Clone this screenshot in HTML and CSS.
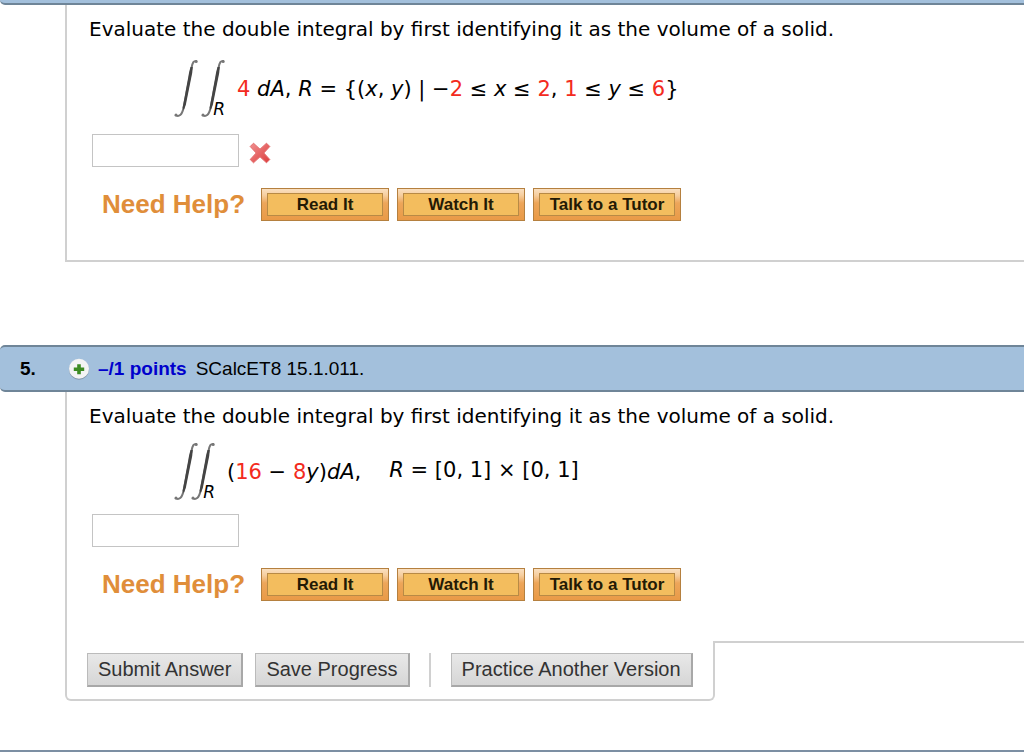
FILE: index.html
```html
<!DOCTYPE html>
<html lang="en">
<head>
<meta charset="utf-8">
<title>SCalcET8 15.1 Homework</title>
<link rel="stylesheet" href="styles.css">
</head>
<body>
<svg class="defs" aria-hidden="true">
  <symbol id="integral" viewBox="0 0 24 58">
    <path d="M1 56C5 58.500 8 56 9.500 49L17.500 9C18.600 3 19.500 1.500 23 2" fill="none" stroke="#777" stroke-width="2"/>
    <path d="M8.600 49L15.200 13L16.500 8L18.800 8L18.200 14L11.800 46L9.800 51Z" fill="#444"/>
    <circle cx="2" cy="56" r="1.500" fill="#777"/>
    <circle cx="22.200" cy="2.500" r="1.500" fill="#777"/>
  </symbol>
</svg>
<main>
  <section class="question">
    <div class="bar bar-end"></div>
    <div class="body body-closed">
      <p class="prompt">Evaluate the double integral by first identifying it as the volume of a solid.</p>
      <div class="math math-spaced">
        <div class="integrals integrals-wide">
          <svg class="integral"><use href="#integral"/></svg>
          <svg class="integral"><use href="#integral"/></svg>
          <i class="region">R</i>
        </div>
        <span class="formula"><b class="num">4</b> <i>dA</i>, <i>R</i> = {(<i>x</i>, <i>y</i>) | −<b class="num">2</b> ≤ <i>x</i> ≤ <b class="num">2</b>, <b class="num">1</b> ≤ <i>y</i> ≤ <b class="num">6</b>}</span>
      </div>
      <div class="answer">
        <input class="field" type="text" aria-label="Answer to question 4">
        <svg class="wrong" viewBox="0 0 22 22" role="img" aria-label="Incorrect">
          <defs><linearGradient id="red" x1="0" y1="0" x2="1" y2="1"><stop offset="0" stop-color="#f09090"/><stop offset="1" stop-color="#dc3c3c"/></linearGradient></defs>
          <path d="M4.500 1.200L11 7.200L17.500 1.200L20.800 4.500L14.800 11L20.800 17.500L17.500 20.800L11 14.800L4.500 20.800L1.200 17.500L7.200 11L1.200 4.500Z" fill="url(#red)" stroke="#e36a6a" stroke-linejoin="round"/>
        </svg>
      </div>
      <div class="help">
        <span class="help-label">Need Help?</span>
        <button class="help-button" type="button"><span>Read It</span></button>
        <button class="help-button" type="button"><span>Watch It</span></button>
        <button class="help-button help-tutor" type="button"><span>Talk to a Tutor</span></button>
      </div>
    </div>
  </section>

  <section class="question">
    <header class="bar">
      <span class="number">5.</span>
      <svg class="plus" viewBox="0 0 22 22" aria-hidden="true">
        <circle cx="11" cy="11.800" r="10" fill="#8296aa"/>
        <circle cx="11" cy="10.800" r="10" fill="#f4f4f4"/>
        <path d="M9.200 6.200h3.600v3.300h3.400v3.400h-3.400v3.300H9.200v-3.300H5.800V9.500h3.400Z" fill="#3d8b22"/>
      </svg>
      <a class="points" href="#q5">–/1 points</a>
      <span>SCalcET8 15.1.011.</span>
    </header>
    <div class="body" id="q5">
      <p class="prompt">Evaluate the double integral by first identifying it as the volume of a solid.</p>
      <div class="math">
        <div class="integrals">
          <svg class="integral"><use href="#integral"/></svg>
          <svg class="integral"><use href="#integral"/></svg>
          <i class="region">R</i>
        </div>
        <span class="formula">(<b class="num">16</b> − <b class="num">8</b><i>y</i>)<i>dA</i>,</span>
        <span class="formula domain"><i>R</i> = [0, 1] × [0, 1]</span>
      </div>
      <div class="answer">
        <input class="field" type="text" aria-label="Answer to question 5">
      </div>
      <div class="help">
        <span class="help-label">Need Help?</span>
        <button class="help-button" type="button"><span>Read It</span></button>
        <button class="help-button" type="button"><span>Watch It</span></button>
        <button class="help-button help-tutor" type="button"><span>Talk to a Tutor</span></button>
      </div>
    </div>
    <footer class="footer">
      <div class="actions">
        <button class="action" type="button">Submit Answer</button>
        <button class="action" type="button">Save Progress</button>
        <div class="practice"><button class="action" type="button">Practice Another Version</button></div>
      </div>
      <div class="rule"></div>
    </footer>
  </section>
  <div class="next"></div>
</main>
</body>
</html>
```
FILE: styles.css
```css
* { box-sizing: border-box; }

body {
  margin: 0;
  background: #fff;
  color: #000;
  font-family: Verdana, "DejaVu Sans", sans-serif;
  font-size: 20px;
  line-height: 24px;
}

.defs { display: none; }

.bar {
  display: flex;
  align-items: center;
  height: 47px;
  padding-left: 20px;
  background: #a3c0dc;
  border: solid #6f8598;
  border-width: 2px 0;
  border-radius: 5px 0 0 5px;
  font-family: Arial, "Liberation Sans", sans-serif;
  font-size: 19px;
}
.bar-end {
  height: 5px;
  border-top: 0;
  border-radius: 0 0 0 5px;
}
.number { width: 48px; font-weight: bold; }
.plus { width: 22px; height: 22px; margin-right: 8px; }
.points {
  margin-right: 9px;
  color: #0000cc;
  font-weight: bold;
  text-decoration: none;
}

.body {
  margin-left: 65px;
  padding: 12px 0 40px 22px;
  border-left: 2px solid #d0d0d0;
}
.body-closed {
  margin-bottom: 83px;
  padding-bottom: 39px;
  border-bottom: 2px solid #d0d0d0;
}
.prompt { margin: 0; }

.math {
  display: flex;
  align-items: center;
  height: 58px;
  margin: 14px 0 14px 85px;
  font-size: 21px;
}
.math-spaced {
  margin-top: 18px;
  margin-bottom: 17px;
}
.integrals {
  display: flex;
  position: relative;
  margin-right: 12px;
}
.integral { width: 24px; height: 58px; }
.integral + .integral { margin-left: -7px; }
.integrals-wide .integral + .integral { margin-left: 3px; }
.region {
  position: absolute;
  right: 0;
  bottom: -2px;
  font-size: 17px;
  line-height: 20px;
}
.formula { padding-top: 2px; white-space: nowrap; }
.num { color: #f32a20; font-weight: normal; }
.domain { margin-left: 28px; padding: 0 0 2px; }

.answer {
  display: flex;
  align-items: center;
  gap: 10px;
  margin: 0 0 21px 3px;
}
.field {
  width: 147px;
  height: 33px;
  padding: 4px 8px;
  border: 1px solid #c4c4c4;
  font: inherit;
}
.wrong { width: 22px; height: 22px; margin-top: 4px; }

.help { display: flex; align-items: center; gap: 8px; margin-left: 13px; }
.help-label {
  margin-right: 8px;
  padding-bottom: 2px;
  color: #e08e3a;
  font: bold 26px/30px Arial, "Liberation Sans", sans-serif;
}
.help-button {
  width: 128px;
  height: 33px;
  padding: 4px 5px;
  border: 1px solid #b5803f;
  background: linear-gradient(#f9dfc0, #f6cfa0 20%, #eda65a 45%, #e99a47);
  color: #231a05;
  font: bold 17px/21px Arial, "Liberation Sans", sans-serif;
}
.help-button span {
  display: block;
  border: 1px solid #b88a45;
  background: #f3bd5e;
}
.help-tutor { width: 148px; }

.footer { display: flex; margin-left: 65px; }
.actions {
  display: flex;
  gap: 12px;
  padding: 12px 20px 12px 20px;
  border: solid #d0d0d0;
  border-width: 0 2px 2px;
  border-radius: 0 0 6px 6px;
}
.action {
  height: 34px;
  padding: 0 10px 2px;
  border: 1px solid #bbb;
  border-right: 2px solid #a8a8a8;
  border-bottom: 2px solid #a8a8a8;
  background: linear-gradient(#e8e8e8, #d6d6d6);
  color: #333;
  font: 20px/24px Arial, "Liberation Sans", sans-serif;
  white-space: nowrap;
}
.practice {
  margin-left: 7px;
  padding-left: 20px;
  border-left: 2px solid #d0d0d0;
}
.rule { flex: 1; border-top: 2px solid #d0d0d0; }
.next { margin-top: 49px; border-top: 2px solid #7c8fa3; }
```
